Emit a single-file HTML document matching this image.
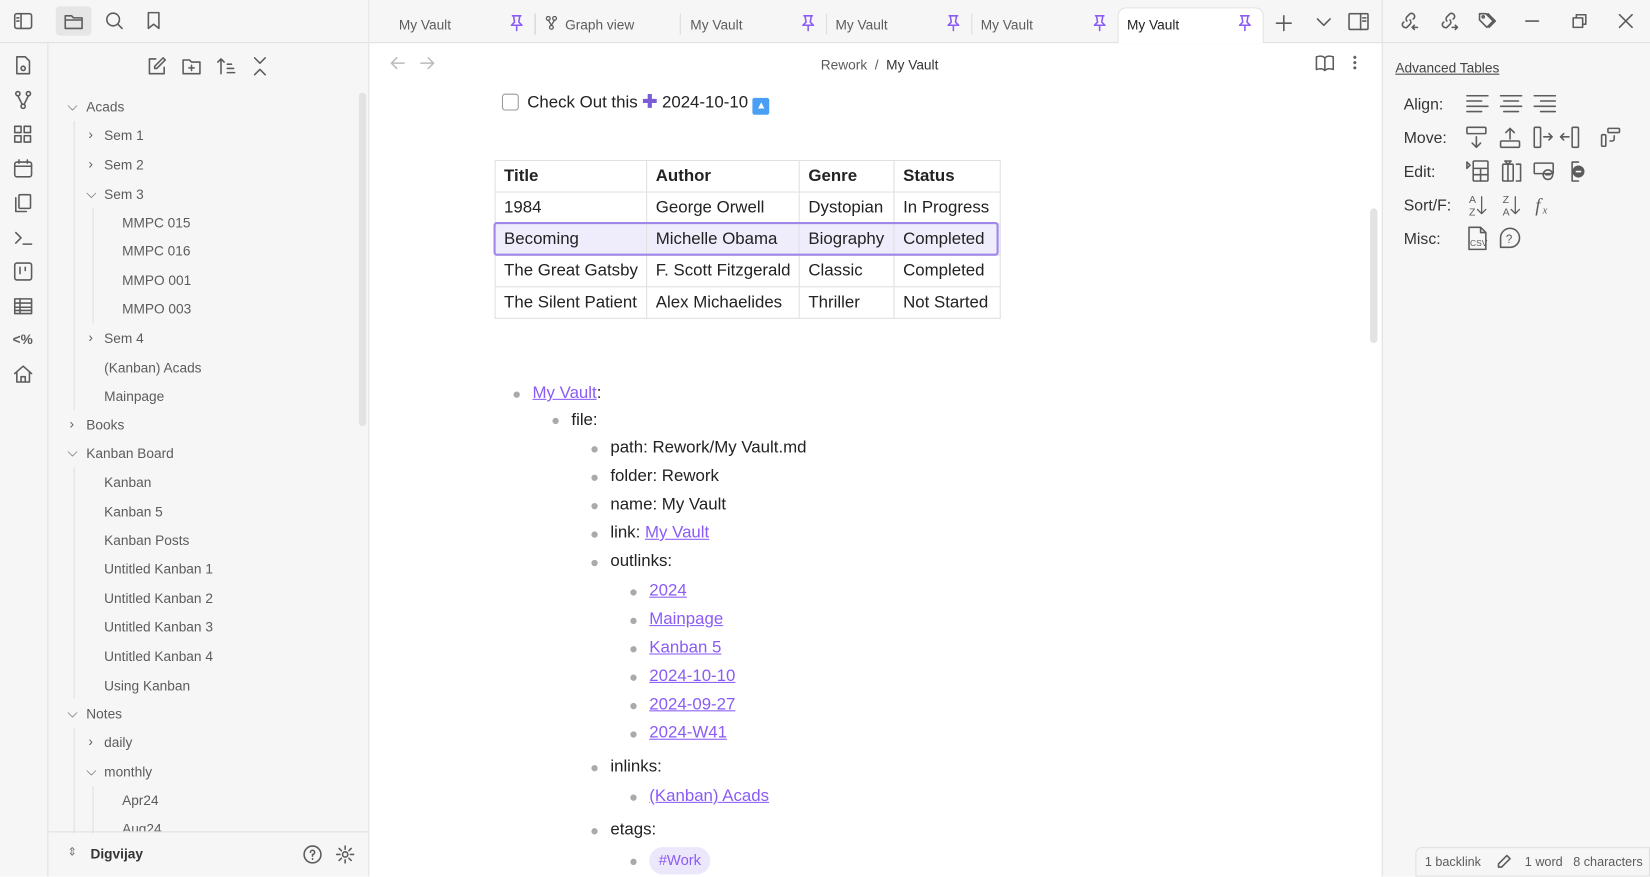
<!DOCTYPE html>
<html><head><meta charset="utf-8"><style>
*{box-sizing:border-box;margin:0;padding:0}
html,body{width:1650px;height:877px;overflow:hidden;background:#fff;font-family:"Liberation Sans",sans-serif;color:#222}
#w{position:absolute;left:0;top:0;width:1568px;height:833px;transform:scale(1.0523);transform-origin:0 0}
.a{position:absolute;white-space:nowrap}
.g{background:#f6f6f6}
svg{position:absolute;fill:none;stroke:#5c5c5c;stroke-width:1.5;stroke-linecap:round;stroke-linejoin:round}
.t{font-size:13px;color:#5c5c5c}
.m{font-size:16px;color:#222}
.lk{color:#8a5cf5;text-decoration:underline}
.b{position:absolute;width:6px;height:6px;border-radius:50%;background:#aaa}
table{border-collapse:collapse;font-size:16px}
td{border:1px solid #e0e0e0;padding:0 8px;height:30px}
</style></head><body><div id="w">
<div class="a g" style="left:0;top:0;width:350px;height:833px"></div>
<div class="a" style="left:45px;top:40px;width:1px;height:793px;background:#e0e0e0"></div>
<div class="a" style="left:0;top:40px;width:350px;height:1px;background:#e0e0e0"></div>
<div class="a" style="left:350px;top:0;width:1px;height:833px;background:#e0e0e0"></div>
<div class="a g" style="left:351px;top:0;width:962px;height:40px"></div>
<div class="a" style="left:351px;top:40px;width:962px;height:1px;background:#e0e0e0"></div>
<div class="a g" style="left:1313px;top:0;width:255px;height:833px;border-left:1px solid #e0e0e0"></div>
<div class="a" style="left:1313px;top:40px;width:255px;height:1px;background:#e0e0e0"></div>
<div class="a" style="left:1062px;top:7px;width:139px;height:34px;background:#fff;border:1px solid #e0e0e0;border-bottom:none;border-radius:8px 8px 0 0"></div>
<div class="a" style="left:53px;top:6px;width:34px;height:28px;background:#e6e6e6;border-radius:4px"></div>
<svg style="left:13px;top:12px" width="18" height="16"><rect x="1" y="1" width="16" height="14" rx="2"/><path d="M7 1v14M3 5h2M3 8h2"/></svg>
<svg style="left:61px;top:12px" width="18" height="16"><path d="M1 3h6l2 2h8v10H1zM1 7h16"/></svg>
<svg style="left:100px;top:11px" width="18" height="18"><circle cx="7.5" cy="7.5" r="6"/><path d="M12 12l4 4"/></svg>
<svg style="left:139px;top:11px" width="14" height="18"><path d="M2 1h10v15l-5-4-5 4z"/></svg>
<svg style="left:13px;top:53px" width="18" height="18"><path d="M3 1h8l4 4v12H3zM7 12a2 2 0 1 0 0-.1"/></svg>
<svg style="left:13px;top:86px" width="18" height="18"><circle cx="4" cy="3" r="2"/><circle cx="14" cy="3" r="2"/><circle cx="9" cy="15" r="2"/><path d="M4 5l4 8M14 5l-4 8"/></svg>
<svg style="left:13px;top:119px" width="18" height="18"><rect x="1" y="1" width="6" height="6"/><rect x="10" y="1" width="6" height="6"/><rect x="1" y="10" width="6" height="6"/><rect x="10" y="10" width="6" height="6"/></svg>
<svg style="left:13px;top:151px" width="18" height="18"><rect x="1" y="3" width="16" height="14" rx="2"/><path d="M1 7h16M5 1v3M13 1v3"/></svg>
<svg style="left:13px;top:184px" width="18" height="18"><rect x="5" y="1" width="11" height="13" rx="1"/><path d="M2 4v13h10"/></svg>
<svg style="left:13px;top:217px" width="18" height="18"><path d="M2 4l5 5-5 5M9 15h8"/></svg>
<svg style="left:13px;top:249px" width="18" height="18"><rect x="1" y="1" width="16" height="16" rx="2"/><path d="M6 5v6M11 5v3"/></svg>
<svg style="left:13px;top:282px" width="18" height="18"><rect x="1" y="2" width="16" height="14"/><path d="M1 6h16M1 10h16M1 13h16M6 2v14"/></svg>
<div class="a" style="left:12px;top:315px;font-size:13px;color:#5c5c5c;font-weight:bold">&lt;%</div>
<svg style="left:13px;top:347px" width="18" height="18"><path d="M1 8l8-7 8 7M3 7v9h12V7M7 16v-5h4v5"/></svg>
<svg style="left:140px;top:54px" width="18" height="18"><path d="M8 2H2v14h14v-6M15 1l2 2-8 8H7V9z"/></svg>
<svg style="left:173px;top:54px" width="18" height="18"><path d="M1 3h6l2 2h8v11H1zM9 8v5M6.5 10.5h5"/></svg>
<svg style="left:206px;top:54px" width="18" height="18"><path d="M4 16V2M1 5l3-3 3 3M10 7h4M10 11h6M10 15h7"/></svg>
<svg style="left:239px;top:54px" width="16" height="18"><path d="M3 1l5 5 5-5M3 17l5-5 5 5"/></svg>
<div class="a" style="left:341px;top:88px;width:7px;height:317px;background:#e3e3e3;border-radius:4px"></div>
<div class="a" style="left:70px;top:115px;width:1px;height:275px;background:#e0e0e0"></div>
<div class="a" style="left:88px;top:198px;width:1px;height:110px;background:#e0e0e0"></div>
<div class="a" style="left:70px;top:444px;width:1px;height:220px;background:#e0e0e0"></div>
<div class="a" style="left:70px;top:692px;width:1px;height:100px;background:#e0e0e0"></div>
<div class="a" style="left:88px;top:747px;width:1px;height:45px;background:#e0e0e0"></div>
<div class="a t" style="left:0;top:0;width:350px;height:790px;overflow:hidden">
<div class="a" style="left:64px;top:93px">⌵</div><div class="a" style="left:82px;top:94px">Acads</div>
<div class="a" style="left:84px;top:120px">›</div><div class="a" style="left:99px;top:121px">Sem 1</div>
<div class="a" style="left:84px;top:148px">›</div><div class="a" style="left:99px;top:149px">Sem 2</div>
<div class="a" style="left:82px;top:176px">⌵</div><div class="a" style="left:99px;top:177px">Sem 3</div>
<div class="a" style="left:116px;top:204px">MMPC 015</div>
<div class="a" style="left:116px;top:231px">MMPC 016</div>
<div class="a" style="left:116px;top:259px">MMPO 001</div>
<div class="a" style="left:116px;top:286px">MMPO 003</div>
<div class="a" style="left:84px;top:313px">›</div><div class="a" style="left:99px;top:314px">Sem 4</div>
<div class="a" style="left:99px;top:342px">(Kanban) Acads</div>
<div class="a" style="left:99px;top:369px">Mainpage</div>
<div class="a" style="left:66px;top:395px">›</div><div class="a" style="left:82px;top:396px">Books</div>
<div class="a" style="left:64px;top:422px">⌵</div><div class="a" style="left:82px;top:423px">Kanban Board</div>
<div class="a" style="left:99px;top:451px">Kanban</div>
<div class="a" style="left:99px;top:479px">Kanban 5</div>
<div class="a" style="left:99px;top:506px">Kanban Posts</div>
<div class="a" style="left:99px;top:533px">Untitled Kanban 1</div>
<div class="a" style="left:99px;top:561px">Untitled Kanban 2</div>
<div class="a" style="left:99px;top:588px">Untitled Kanban 3</div>
<div class="a" style="left:99px;top:616px">Untitled Kanban 4</div>
<div class="a" style="left:99px;top:644px">Using Kanban</div>
<div class="a" style="left:64px;top:670px">⌵</div><div class="a" style="left:82px;top:671px">Notes</div>
<div class="a" style="left:84px;top:697px">›</div><div class="a" style="left:99px;top:698px">daily</div>
<div class="a" style="left:82px;top:725px">⌵</div><div class="a" style="left:99px;top:726px">monthly</div>
<div class="a" style="left:116px;top:753px">Apr24</div>
<div class="a" style="left:116px;top:780px">Aug24</div>
</div>
<div class="a" style="left:46px;top:790px;width:304px;height:1px;background:#e0e0e0"></div>
<div class="a" style="left:64px;top:803px;font-size:11px;color:#777">⇕</div>
<div class="a" style="left:86px;top:804px;font-size:13px;font-weight:bold;color:#333">Digvijay</div>
<svg style="left:288px;top:803px" width="18" height="18"><circle cx="9" cy="9" r="8"/><path d="M7 7a2 2 0 1 1 2 2v1.5M9 13v.5"/></svg>
<svg style="left:319px;top:803px" width="18" height="18"><circle cx="9" cy="9" r="2.5"/><path d="M9 1v3M9 14v3M1 9h3M14 9h3M3.3 3.3l2.1 2.1M12.6 12.6l2.1 2.1M3.3 14.7l2.1-2.1M12.6 5.4l2.1-2.1"/></svg>
<div class="a t" style="left:379px;top:16px">My Vault</div>
<div class="a t" style="left:537px;top:16px">Graph view</div>
<div class="a t" style="left:656px;top:16px">My Vault</div>
<div class="a t" style="left:794px;top:16px">My Vault</div>
<div class="a t" style="left:932px;top:16px">My Vault</div>
<div class="a" style="left:1071px;top:16px;font-size:13px;color:#222">My Vault</div>
<div class="a" style="left:508px;top:13px;width:1px;height:20px;background:#ccc"></div>
<div class="a" style="left:646px;top:13px;width:1px;height:20px;background:#ddd"></div>
<div class="a" style="left:785px;top:13px;width:1px;height:20px;background:#ddd"></div>
<div class="a" style="left:923px;top:13px;width:1px;height:20px;background:#ddd"></div>
<svg style="left:485px;top:14px;stroke:#8a5cf5" width="12" height="16"><path d="M2 1h8M3 1l1 6-3 3h10L8 7l1-6M6 10v5"/></svg>
<svg style="left:762px;top:14px;stroke:#8a5cf5" width="12" height="16"><path d="M2 1h8M3 1l1 6-3 3h10L8 7l1-6M6 10v5"/></svg>
<svg style="left:900px;top:14px;stroke:#8a5cf5" width="12" height="16"><path d="M2 1h8M3 1l1 6-3 3h10L8 7l1-6M6 10v5"/></svg>
<svg style="left:1039px;top:14px;stroke:#8a5cf5" width="12" height="16"><path d="M2 1h8M3 1l1 6-3 3h10L8 7l1-6M6 10v5"/></svg>
<svg style="left:1177px;top:14px;stroke:#8a5cf5" width="12" height="16"><path d="M2 1h8M3 1l1 6-3 3h10L8 7l1-6M6 10v5"/></svg>
<svg style="left:518px;top:15px;stroke-width:1.2" width="12" height="14"><circle cx="3" cy="2.5" r="1.8"/><circle cx="9" cy="2.5" r="1.8"/><circle cx="6" cy="11" r="1.8"/><path d="M3 4l3 5M9 4l-3 5"/></svg>
<svg style="left:1212px;top:14px" width="16" height="16"><path d="M8 1v14M1 8h14"/></svg>
<svg style="left:1251px;top:16px" width="14" height="10"><path d="M1 2l6 6 6-6"/></svg>
<svg style="left:1281px;top:12px" width="20" height="18"><rect x="1" y="1" width="18" height="15" rx="1"/><path d="M12 1v15M14 5h3M14 8h3"/></svg>
<svg style="left:1330px;top:11px" width="18" height="18"><path d="M7 9a3 3 0 0 1 0-4l3-3a3 3 0 0 1 4 4l-1 1M10 8a3 3 0 0 1 0 4l-3 3a3 3 0 0 1-4-4l1-1M12 15h5M14 13l-2 2 2 2"/></svg>
<svg style="left:1368px;top:11px" width="18" height="18"><path d="M7 9a3 3 0 0 1 0-4l3-3a3 3 0 0 1 4 4l-1 1M10 8a3 3 0 0 1 0 4l-3 3a3 3 0 0 1-4-4l1-1M12 15h5M15 13l2 2-2 2"/></svg>
<svg style="left:1405px;top:11px" width="20" height="18"><path d="M1 2v6l7 7 6-6-7-7zM9 2l7 7-6 6"/><circle cx="4.5" cy="5" r="1"/></svg>
<svg style="left:1449px;top:19px" width="14" height="2"><path d="M1 1h12"/></svg>
<svg style="left:1494px;top:13px" width="14" height="14"><rect x="1" y="4" width="9" height="9"/><path d="M4 4V1h9v9h-3"/></svg>
<svg style="left:1538px;top:13px" width="14" height="14"><path d="M1 1l12 12M13 1L1 13"/></svg>
<svg style="left:371px;top:54px;stroke:#bbb" width="14" height="12"><path d="M13 6H1M6 1L1 6l5 5"/></svg>
<svg style="left:399px;top:54px;stroke:#bbb" width="14" height="12"><path d="M1 6h12M8 1l5 5-5 5"/></svg>
<div class="a t" style="left:780px;top:54px">Rework&nbsp; / &nbsp;<span style="color:#333">My Vault</span></div>
<svg style="left:1250px;top:52px" width="18" height="16"><path d="M9 3v12M9 3C7 1 4 1 1 2v12c3-1 6-1 8 1 2-2 5-2 8-1V2c-3-1-6-1-8 1"/></svg>
<div class="a" style="left:1286px;top:52px;width:3px;height:14px;background:radial-gradient(circle,#5c5c5c 1.3px,transparent 1.6px) 0 0/3px 5px"></div>
<div class="a" style="left:1302px;top:198px;width:7px;height:128px;background:#e3e3e3;border-radius:4px"></div>
<div class="a" style="left:477px;top:89px;width:16px;height:16px;border:1.5px solid #999;border-radius:3px;background:#fff"></div>
<div class="a m" style="left:501px;top:88px;line-height:18px">Check Out this <span style="color:#7b5cd6;font-weight:bold;font-size:17px">✚</span> 2024-10-10 <span style="display:inline-block;width:16px;height:16px;background:#4a9ff5;border-radius:2px;color:#fff;font-size:10px;text-align:center;line-height:16px;vertical-align:-1px">▲</span></div>
<table class="a" style="left:470px;top:152px">
<tr style="font-weight:bold"><td style="width:142px">Title</td><td style="width:143px">Author</td><td style="width:90px">Genre</td><td style="width:101px">Status</td></tr>
<tr><td>1984</td><td>George Orwell</td><td>Dystopian</td><td>In Progress</td></tr>
<tr style="background:#efecfb"><td>Becoming</td><td>Michelle Obama</td><td>Biography</td><td>Completed</td></tr>
<tr><td>The Great Gatsby</td><td>F. Scott Fitzgerald</td><td>Classic</td><td>Completed</td></tr>
<tr><td>The Silent Patient</td><td>Alex Michaelides</td><td>Thriller</td><td>Not Started</td></tr>
</table>
<div class="a" style="left:469px;top:211px;width:480px;height:32px;border:2px solid #9f86e8;border-radius:3px"></div>
<div class="b" style="left:488px;top:372px"></div><div class="a m" style="left:506px;top:365px"><span class="lk">My Vault</span>:</div>
<div class="b" style="left:525px;top:397px"></div><div class="a m" style="left:543px;top:391px">file:</div>
<div class="b" style="left:562px;top:424px"></div><div class="a m" style="left:580px;top:417px">path: Rework/My Vault.md</div>
<div class="b" style="left:562px;top:451px"></div><div class="a m" style="left:580px;top:444px">folder: Rework</div>
<div class="b" style="left:562px;top:478px"></div><div class="a m" style="left:580px;top:471px">name: My Vault</div>
<div class="b" style="left:562px;top:505px"></div><div class="a m" style="left:580px;top:498px">link: <span class="lk">My Vault</span></div>
<div class="b" style="left:562px;top:532px"></div><div class="a m" style="left:580px;top:525px">outlinks:</div>
<div class="b" style="left:599px;top:560px"></div><div class="a m lk" style="left:617px;top:553px">2024</div>
<div class="b" style="left:599px;top:587px"></div><div class="a m lk" style="left:617px;top:580px">Mainpage</div>
<div class="b" style="left:599px;top:614px"></div><div class="a m lk" style="left:617px;top:607px">Kanban 5</div>
<div class="b" style="left:599px;top:641px"></div><div class="a m lk" style="left:617px;top:634px">2024-10-10</div>
<div class="b" style="left:599px;top:668px"></div><div class="a m lk" style="left:617px;top:661px">2024-09-27</div>
<div class="b" style="left:599px;top:695px"></div><div class="a m lk" style="left:617px;top:688px">2024-W41</div>
<div class="b" style="left:562px;top:727px"></div><div class="a m" style="left:580px;top:720px">inlinks:</div>
<div class="b" style="left:599px;top:755px"></div><div class="a m lk" style="left:617px;top:748px">(Kanban) Acads</div>
<div class="b" style="left:562px;top:787px"></div><div class="a m" style="left:580px;top:780px">etags:</div>
<div class="b" style="left:599px;top:816px"></div><div class="a" style="left:617px;top:805px;height:26px;padding:4px 9px;background:#ece7fb;border-radius:13px;color:#8a5cf5;font-size:14px">#Work</div>
<div class="a" style="left:1326px;top:57px;font-size:13px;color:#444;text-decoration:underline">Advanced Tables</div>
<div class="a" style="left:1334px;top:84px;font-size:15px;color:#333;line-height:32px">Align:<br>Move:<br>Edit:<br>Sort/F:<br>Misc:</div>
<svg style="left:1393px;top:89px" width="110" height="20"><path d="M1 2h20M1 7h14M1 12h20M1 17h14M33 2h20M36 7h14M33 12h20M36 17h14M65 2h20M71 7h14M65 12h20M71 17h14"/></svg>
<svg style="left:1393px;top:120px" width="150" height="22"><rect x="1" y="1" width="18" height="6" rx="1"/><path d="M10 10v10M6 16l4 4 4-4"/><rect x="33" y="14" width="18" height="6" rx="1"/><path d="M42 12V2M38 6l4-4 4 4"/><rect x="65" y="1" width="6" height="19" rx="1"/><path d="M74 10h8M79 7l3 3-3 3"/><rect x="101" y="1" width="6" height="19" rx="1"/><path d="M98 10h-8M93 7l-3 3 3 3"/><rect x="129" y="8" width="4" height="11" rx="1"/><rect x="135" y="2" width="11" height="4" rx="1"/><path d="M141 9v3a2 2 0 0 1-2 2h-2"/></svg>
<svg style="left:1393px;top:152px" width="120" height="22"><path d="M1 2l3 3-3 3z"/><rect x="7" y="1" width="14" height="19" rx="1"/><path d="M7 8h14M7 14h14M14 8v12"/><rect x="35" y="4" width="10" height="16" rx="1"/><path d="M40 4v16M37 1h6l-3 3zM48 4h4v16h-4"/><rect x="65" y="3" width="18" height="10" rx="1"/><circle cx="78" cy="14" r="4.5"/><path d="M76 14h4"/><path d="M107 2h-6v18h6"/><circle cx="107" cy="11" r="5" fill="#5c5c5c"/><path d="M105 11h4" stroke="#fff"/></svg>
<svg style="left:1393px;top:184px;stroke-width:1.2" width="90" height="22"><text x="3" y="9" font-size="10" fill="#5c5c5c" stroke="none" font-family="Liberation Sans">A</text><text x="3" y="21" font-size="10" fill="#5c5c5c" stroke="none" font-family="Liberation Sans">Z</text><path d="M15 3v16M11 15l4 4 4-4"/><text x="35" y="9" font-size="10" fill="#5c5c5c" stroke="none" font-family="Liberation Sans">Z</text><text x="35" y="21" font-size="10" fill="#5c5c5c" stroke="none" font-family="Liberation Sans">A</text><path d="M47 3v16M43 15l4 4 4-4"/><text x="66" y="17" font-size="18" font-style="italic" fill="#5c5c5c" stroke="none" font-family="Liberation Serif">f</text><text x="73" y="19" font-size="10" font-style="italic" fill="#5c5c5c" stroke="none" font-family="Liberation Serif">x</text></svg>
<svg style="left:1393px;top:215px" width="60" height="24"><path d="M3 1h11l5 5v16H3zM14 1v5h5"/><text x="4" y="19" font-size="8" fill="#5c5c5c" stroke="none" font-family="Liberation Sans">CSV</text><path d="M33 11a9 9 0 1 1 9 9h-9z"/><text x="38" y="16" font-size="11" fill="#5c5c5c" stroke="none" font-family="Liberation Sans">?</text></svg>
<div class="a" style="left:1345px;top:805px;width:223px;height:28px;background:#f6f6f6;border:1px solid #e0e0e0;border-radius:6px 0 0 0"></div>
<div class="a" style="left:1354px;top:812px;font-size:12px;color:#5c5c5c">1 backlink</div>
<svg style="left:1422px;top:812px" width="14" height="14"><path d="M10 1l3 3-8 8H2V9z"/></svg>
<div class="a" style="left:1449px;top:812px;font-size:12px;color:#5c5c5c">1 word&nbsp;&nbsp; 8 characters</div>
</div></body></html>
